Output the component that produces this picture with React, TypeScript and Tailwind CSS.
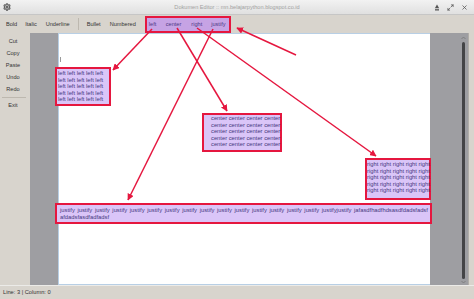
import { Settings, Maximize2, X } from "lucide-react";

const box = "border-2 border-[#e5173f] bg-[#dac5f8] text-[#45387e] text-[5.8px] leading-[6.6px]";

export default function App() {
  const justifyWords = [...Array(15).fill("justify"), "justifyjustify", "jafasdfhadfhdsasdfdadsfadsf"];

  return (
    <div className="relative w-[474px] h-[299px] overflow-hidden flex flex-col bg-[#d8d4cd] font-['Liberation_Sans',Arial,sans-serif] text-[#333]">
      {/* title bar */}
      <div className="h-[15px] grid grid-cols-[60px_1fr_60px] items-center bg-gradient-to-b from-[#f2f2f2] to-[#e0e0e0] border-b border-[#c6c6c6]">
        <div className="pl-[3px] flex items-center">
          <Settings size={8} strokeWidth={3.2} className="text-[#555]" />
        </div>
        <div className="text-center text-[5.6px] text-[#a2a2a2] whitespace-nowrap">Dokumen Editor :: mn.belajarpython.blogspot.co.id</div>
        <div className="flex items-center justify-end gap-[7px] pr-[6px] text-[#555]">
          <svg width="6" height="7" viewBox="0 0 6 7">
            <path d="M3 0.5 L5.2 4.2 L0.8 4.2 Z" fill="#555" />
            <rect x="1" y="5.2" width="4" height="1.3" fill="#555" />
          </svg>
          <Maximize2 size={7} strokeWidth={2.6} />
          <X size={7} strokeWidth={2.6} />
        </div>
      </div>

      {/* toolbar */}
      <div className="h-[18px] flex items-center text-[5.6px] text-[#333] whitespace-nowrap">
        <span className="ml-[6px]">Bold</span>
        <span className="ml-[8px]">Italic</span>
        <span className="ml-[9px]">Underline</span>
        <span className="ml-[8px] w-px h-[12px] bg-[#bdb8af]" />
        <span className="ml-[8px]">Bullet</span>
        <span className="ml-[9px]">Numbered</span>
        <div className="ml-[9px] h-[17px] w-[86px] flex items-center border-2 border-[#e5173f] bg-[#c6a3e4] text-[#4f3884] pl-[2px]">
          <span>left</span>
          <span className="ml-[9.5px]">center</span>
          <span className="ml-[10px]">right</span>
          <span className="ml-[9px]">justify</span>
        </div>
      </div>

      {/* main */}
      <div className="flex-1 flex min-h-0">
        <div className="w-[30px] flex flex-col pt-[2px] pr-[4px] text-[5.6px] text-[#333]">
          {["Cut", "Copy", "Paste", "Undo", "Redo"].map((t) => (
            <div key={t} className="h-[12px] flex items-center justify-center">{t}</div>
          ))}
          <div className="mt-[2px] ml-[2px] h-px bg-[#bdb8af]" />
          <div className="mt-px h-[12px] flex items-center justify-center">Exit</div>
        </div>

        <div className="flex-1 flex bg-[#9e9ea2] pl-[28px]">
          <div className="w-[372px] h-full bg-white border-l border-t border-b border-[#b8cfe5] flex flex-col">
            <div className="ml-px mt-[23px] w-px h-[5px] bg-[#9a9a9a]" />
            <div className={`${box} ml-[-4px] mt-[5px] w-[56px] h-[39px] pt-px pl-px`}>
              {Array.from({ length: 5 }).map((_, i) => (
                <div key={i} className="whitespace-nowrap">left left left left left</div>
              ))}
            </div>
            <div className={`${box} ml-[143px] mt-[7px] w-[80px] h-[39px] pl-[7px]`}>
              {Array.from({ length: 5 }).map((_, i) => (
                <div key={i} className="whitespace-nowrap">center center center center</div>
              ))}
            </div>
            <div className={`${box} ml-[306px] mt-[6px] w-[66px] h-[42px] pt-px text-right pr-px`}>
              {Array.from({ length: 5 }).map((_, i) => (
                <div key={i} className="whitespace-nowrap">right right right right right</div>
              ))}
            </div>
            <div className={`${box} ml-[-4px] mt-[3px] w-[377px] h-[21px] pt-[2px] pl-[3px] pr-[2px] leading-[7px]`}>
              <div className="flex justify-between whitespace-nowrap">
                {justifyWords.map((w, i) => (
                  <span key={i}>{w}</span>
                ))}
              </div>
              <div>afdadsfasdfadfadsf</div>
            </div>
          </div>

          <div className="flex-1 flex justify-end pr-[2px]">
            <div className="w-[6px] flex flex-col items-center pt-[3px] pb-[1px]">
              <svg width="5" height="4" viewBox="0 0 5 4"><path d="M0.5 3 L2.5 1 L4.5 3" stroke="#777" strokeWidth="0.8" fill="none" /></svg>
              <div className="mt-[2px] flex-1 w-[3px] rounded-full bg-[#444446]" />
              <svg width="5" height="4" viewBox="0 0 5 4" className="mt-px"><path d="M0.5 1 L2.5 3 L4.5 1" stroke="#777" strokeWidth="0.8" fill="none" /></svg>
            </div>
          </div>
        </div>
        <div className="w-[6px] border-l border-[#b0ada8]" />
      </div>

      {/* status */}
      <div className="h-[14px] flex items-center pl-[3px] text-[5.7px] text-[#333] border-t border-[#ecebe8]">
        Line: 3 | Column: 0
      </div>

      {/* annotation arrows */}
      <svg className="absolute inset-0 pointer-events-none" width="474" height="299" viewBox="0 0 474 299">
        <defs>
          <marker id="ah" viewBox="0 0 10 10" refX="9" refY="5" markerWidth="4.5" markerHeight="4.5" orient="auto-start-reverse">
            <path d="M0 0 L10 5 L0 10 Z" fill="#e5173f" />
          </marker>
        </defs>
        <g stroke="#e5173f" strokeWidth="1.5" fill="none" markerEnd="url(#ah)">
          <line x1="296" y1="55" x2="237" y2="28" />
          <line x1="152" y1="29" x2="113" y2="70" />
          <line x1="177" y1="28" x2="227" y2="111" />
          <line x1="197" y1="28" x2="376" y2="156" />
          <line x1="213" y1="29" x2="128" y2="200" />
        </g>
      </svg>
    </div>
  );
}
